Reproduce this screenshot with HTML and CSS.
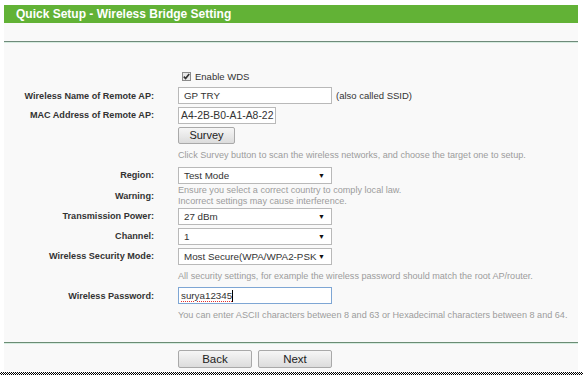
FILE: index.html
```html
<!DOCTYPE html>
<html lang="en">
<head>
  <meta charset="UTF-8" />
  <title>Quick Setup - Wireless Bridge Setting</title>
  <link rel="stylesheet" href="styles.css">
</head>
<body>
  <div class="panel">
    <div class="title">Quick Setup - Wireless Bridge Setting</div>
    <div class="rule"></div>

    <div class="form">
      <div></div>
      <div class="field">
        <span class="check">
          <svg width="9" height="9" viewBox="0 0 9 9"><path d="M1.8 4.6 L3.6 6.6 L7.2 2" fill="none" stroke="#333" stroke-width="1.6"/></svg>
        </span>
        <span class="value">Enable WDS</span>
      </div>

      <div class="label">Wireless Name of Remote AP:</div>
      <div class="field">
        <div class="box">GP TRY</div>
        <span class="value">(also called SSID)</span>
      </div>

      <div class="label">MAC Address of Remote AP:</div>
      <div class="field"><div class="box short">A4-2B-B0-A1-A8-22</div></div>

      <div></div>
      <div class="field"><button class="btn survey">Survey</button></div>

      <div></div>
      <div class="field hint">Click Survey button to scan the wireless networks, and choose the target one to setup.</div>

      <div class="label">Region:</div>
      <div class="field"><div class="box select">Test Mode<span class="arrow">&#9660;</span></div></div>

      <div class="label">Warning:</div>
      <div class="field hint">Ensure you select a correct country to comply local law.<br>Incorrect settings may cause interference.</div>

      <div class="label">Transmission Power:</div>
      <div class="field"><div class="box select">27 dBm<span class="arrow">&#9660;</span></div></div>

      <div class="label">Channel:</div>
      <div class="field"><div class="box select">1<span class="arrow">&#9660;</span></div></div>

      <div class="label">Wireless Security Mode:</div>
      <div class="field"><div class="box select">Most Secure(WPA/WPA2-PSK<span class="arrow">&#9660;</span></div></div>

      <div></div>
      <div class="field hint">All security settings, for example the wireless password should match the root AP/router.</div>

      <div class="label">Wireless Password:</div>
      <div class="field"><div class="box focus"><span class="typo">surya12345</span><span class="caret"></span></div></div>

      <div></div>
      <div class="field hint">You can enter ASCII characters between 8 and 63 or Hexadecimal characters between 8 and 64.</div>
    </div>

    <div class="rule bottom"></div>
    <div class="actions">
      <button class="btn nav">Back</button>
      <button class="btn nav">Next</button>
    </div>
  </div>
  <div class="dots"></div>
</body>
</html>
```

FILE: styles.css
```css
* {
  margin: 0;
  padding: 0;
  box-sizing: border-box;
}
body {
  background: #fff;
  font-family: 'Liberation Sans', Arial, sans-serif;
  color: #333;
  width: 583px;
  height: 376px;
  overflow: hidden;
}
.panel {
  margin: 5px 5px 0 4px;
  background: #f9f9f9;
  height: 366px;
}
.title {
  height: 18px;
  background: #62b236;
  color: #fff;
  font-weight: bold;
  font-size: 12px;
  line-height: 18px;
  padding-left: 12px;
}
.rule {
  margin-top: 18px;
  height: 2px;
  border-top: 1px solid #6f8a7a;
  border-bottom: 1px solid #d6ece0;
}
.rule.bottom {
  margin-top: 17px;
  border-top-color: #6b8c74;
}
.form {
  display: grid;
  grid-template-columns: 150px 1fr;
  grid-template-rows: 20px 19px 20px 20px 20px 20px 21px 20px 20px 20px 20px 19px 20px;
  column-gap: 24px;
  margin-top: 23px;
}
.label {
  text-align: right;
  font-weight: bold;
  font-size: 9.1px;
  align-self: center;
  white-space: nowrap;
}
.field {
  display: flex;
  align-items: center;
  gap: 4px;
  font-size: 9.5px;
  white-space: nowrap;
}
.value {
  font-size: 9.5px;
}
.check {
  width: 9px;
  height: 9px;
  margin-left: 4px;
  border: 1px solid #8a8a8a;
  background: #e8e8e8;
  display: flex;
  align-items: center;
  justify-content: center;
}
.check svg {
  flex: none;
}
.box {
  width: 154px;
  height: 17px;
  border: 1px solid #b9b9b9;
  background: #fff;
  font-size: 9.8px;
  line-height: 15px;
  padding-left: 5px;
  padding-right: 16px;
  display: flex;
  align-items: center;
  position: relative;
  overflow: hidden;
}
.box.short {
  width: 98px;
  padding-left: 2px;
  padding-right: 2px;
  font-size: 10.4px;
}
.arrow {
  position: absolute;
  right: 6px;
  top: 0;
  font-size: 7px;
  color: #111;
}
.box.focus {
  border-color: #7ea6d4;
  padding-left: 2px;
}
.typo {
  text-decoration: underline dotted #e03030;
  text-decoration-thickness: 1px;
  text-underline-offset: 2px;
}
.caret {
  width: 1px;
  height: 12px;
  background: #000;
}
.hint {
  color: #9c9c9c;
  font-size: 9.1px;
  line-height: 11px;
}
.btn {
  font-family: inherit;
  font-size: 11px;
  color: #222;
  border: 1px solid #a9a9a9;
  border-radius: 2px;
  background: linear-gradient(#f6f6f6, #dcdcdc);
}
.btn.survey {
  width: 57px;
  height: 17px;
}
.actions {
  display: flex;
  gap: 6px;
  padding-left: 174px;
  margin-top: 6px;
}
.btn.nav {
  width: 74px;
  height: 18px;
  font-size: 11.5px;
}
.dots {
  margin-top: 1px;
  height: 3px;
  background: repeating-conic-gradient(#000 0 25%, #fff 0 50%) 0 0 / 2px 2px;
}
```
